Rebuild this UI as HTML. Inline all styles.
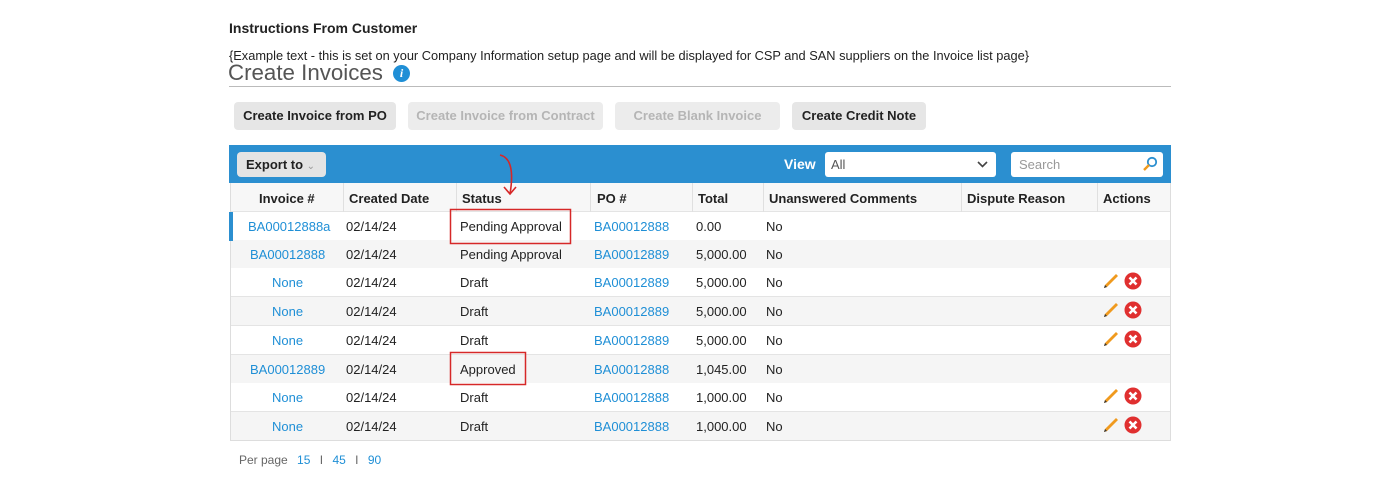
<!DOCTYPE html>
<html><head><meta charset="utf-8"><style>
*{margin:0;padding:0;box-sizing:border-box}
body{width:1400px;height:497px;background:#fff;font-family:"Liberation Sans",Arial,sans-serif;color:#222;position:relative;overflow:hidden}
.a{position:absolute;white-space:nowrap}
.btn{position:absolute;top:102px;height:28px;border-radius:4px;background:#e6e6e6;font-size:13px;font-weight:bold;line-height:28px;text-align:center;color:#222}
.btn.d{color:#b5b5b5;background:#ececec}
.row{position:absolute;left:230px;width:941px;height:29px;border-bottom:1px solid #e4e4e4;font-size:13px}
.row span{position:absolute;top:7px}
.lk{color:#1f8fd6}
.hd{font-weight:bold;font-size:13px}
.hd span{top:8px}
.sep{position:absolute;top:0;width:1px;height:29px;background:#e0e0e0}
</style></head><body>
<div class="a" style="left:229px;top:20px;font-size:14px;font-weight:bold">Instructions From Customer</div>
<div class="a" style="left:229px;top:48px;font-size:12.8px">{Example text - this is set on your Company Information setup page and will be displayed for CSP and SAN suppliers on the Invoice list page}</div>
<div class="a" style="left:228px;top:60px;font-size:22.3px;color:#555">Create Invoices</div>
<div class="a" style="left:393px;top:65px;width:17px;height:17px;border-radius:50%;background:#1f8fd6;color:#fff;font-size:12px;font-weight:bold;font-style:italic;text-align:center;line-height:17px;font-family:'Liberation Serif',serif">i</div>
<div class="a" style="left:229px;top:86px;width:942px;height:1px;background:#bbb"></div>
<div class="btn" style="left:234px;width:162px">Create Invoice from PO</div>
<div class="btn d" style="left:408px;width:195px">Create Invoice from Contract</div>
<div class="btn d" style="left:615px;width:165px">Create Blank Invoice</div>
<div class="btn" style="left:792px;width:134px">Create Credit Note</div>
<div class="a" style="left:229px;top:145px;width:942px;height:38px;background:#2b8fd0"></div>
<div class="a" style="left:237px;top:152px;width:89px;height:25px;border-radius:4px;background:#e4e4e4;font-size:13px;font-weight:bold;line-height:25px;padding-left:9px">Export to <span style="color:#999;font-size:10px;font-weight:normal">⌄</span></div>
<div class="a" style="left:784px;top:156px;color:#fff;font-weight:bold;font-size:14px">View</div>
<div class="a" style="left:825px;top:152px;width:171px;height:25px;background:#fff;border-radius:3px;font-size:13px;color:#555;line-height:25px;padding-left:6px">All<svg style="position:absolute;right:8px;top:9px" width="11" height="7"><path d="M1 1l4.5 4.5L10 1" stroke="#444" stroke-width="1.6" fill="none"/></svg></div>
<div class="a" style="left:1011px;top:152px;width:152px;height:25px;background:#fff;border-radius:3px;font-size:13px;color:#999;line-height:25px;padding-left:8px">Search<svg style="position:absolute;right:5px;top:4px" width="16" height="16"><circle cx="10" cy="6" r="4.2" stroke="#2b8fd0" stroke-width="1.8" fill="none"/><path d="M7 9L2 14" stroke="#f09a1e" stroke-width="2.4"/></svg></div>

<div class="row hd" style="top:183px;background:#f7f7f7">
<span style="left:29px">Invoice #</span><span style="left:119px">Created Date</span><span style="left:232px">Status</span><span style="left:367px">PO #</span><span style="left:468px">Total</span><span style="left:539px">Unanswered Comments</span><span style="left:737px">Dispute Reason</span><span style="left:873px">Actions</span>
<div class="sep" style="left:113px"></div><div class="sep" style="left:226px"></div><div class="sep" style="left:360px"></div><div class="sep" style="left:462px"></div><div class="sep" style="left:533px"></div><div class="sep" style="left:731px"></div><div class="sep" style="left:867px"></div>
</div>

<div class="row" style="top:212px;background:#fff"><span class="lk" style="left:18px">BA00012888a</span><span style="left:116px">02/14/24</span><span style="left:230px">Pending Approval</span><span class="lk" style="left:364px">BA00012888</span><span style="left:466px">0.00</span><span style="left:536px">No</span></div>
<div class="row" style="top:240px;background:#f5f5f5"><span class="lk" style="left:20px">BA00012888</span><span style="left:116px">02/14/24</span><span style="left:230px">Pending Approval</span><span class="lk" style="left:364px">BA00012889</span><span style="left:466px">5,000.00</span><span style="left:536px">No</span></div>
<div class="row" style="top:268px;background:#fff"><span class="lk" style="left:42px">None</span><span style="left:116px">02/14/24</span><span style="left:230px">Draft</span><span class="lk" style="left:364px">BA00012889</span><span style="left:466px">5,000.00</span><span style="left:536px">No</span></div>
<div class="row" style="top:297px;background:#f5f5f5"><span class="lk" style="left:42px">None</span><span style="left:116px">02/14/24</span><span style="left:230px">Draft</span><span class="lk" style="left:364px">BA00012889</span><span style="left:466px">5,000.00</span><span style="left:536px">No</span></div>
<div class="row" style="top:326px;background:#fff"><span class="lk" style="left:42px">None</span><span style="left:116px">02/14/24</span><span style="left:230px">Draft</span><span class="lk" style="left:364px">BA00012889</span><span style="left:466px">5,000.00</span><span style="left:536px">No</span></div>
<div class="row" style="top:355px;background:#f5f5f5"><span class="lk" style="left:20px">BA00012889</span><span style="left:116px">02/14/24</span><span style="left:230px">Approved</span><span class="lk" style="left:364px">BA00012888</span><span style="left:466px">1,045.00</span><span style="left:536px">No</span></div>
<div class="row" style="top:383px;background:#fff"><span class="lk" style="left:42px">None</span><span style="left:116px">02/14/24</span><span style="left:230px">Draft</span><span class="lk" style="left:364px">BA00012888</span><span style="left:466px">1,000.00</span><span style="left:536px">No</span></div>
<div class="row" style="top:412px;background:#f5f5f5"><span class="lk" style="left:42px">None</span><span style="left:116px">02/14/24</span><span style="left:230px">Draft</span><span class="lk" style="left:364px">BA00012888</span><span style="left:466px">1,000.00</span><span style="left:536px">No</span></div>

<div class="a" style="left:230px;top:183px;width:941px;height:258px;border:1px solid #ddd;border-top:none"></div>
<div class="a" style="left:229px;top:212px;width:4px;height:29px;background:#2b8fd0"></div>

<svg class="a" style="left:0;top:0" width="1400" height="497">
<defs><g id="ic"><path d="M2 17l3-1 11-11-2-2L3 14z" fill="#f09a1e"/><path d="M2 17l1-3 2 2z" fill="#333"/><circle cx="31" cy="10" r="8.5" fill="#e03030"/><path d="M27.5 6.5l7 7M34.5 6.5l-7 7" stroke="#fff" stroke-width="2.6"/></g></defs>
<use href="#ic" x="1102" y="271"/><use href="#ic" x="1102" y="300"/><use href="#ic" x="1102" y="329"/><use href="#ic" x="1102" y="386"/><use href="#ic" x="1102" y="415"/>
<rect x="450.5" y="209.5" width="120" height="34" fill="none" stroke="#d62828" stroke-width="1.5"/>
<rect x="450.5" y="352.5" width="75" height="32" fill="none" stroke="#d62828" stroke-width="1.5"/>
<path d="M500 155C513 158 513 176 510 194" stroke="#d62828" stroke-width="1.6" fill="none"/>
<path d="M504 187l6 7 6-7" stroke="#d62828" stroke-width="1.6" fill="none"/>
</svg>

<div class="a" style="left:239px;top:453px;font-size:12px;color:#666">Per page <span style="color:#1f8fd6;margin-left:6px">15</span> <span style="margin:0 6px">I</span> <span style="color:#1f8fd6">45</span> <span style="margin:0 6px">I</span> <span style="color:#1f8fd6">90</span></div>
</body></html>
